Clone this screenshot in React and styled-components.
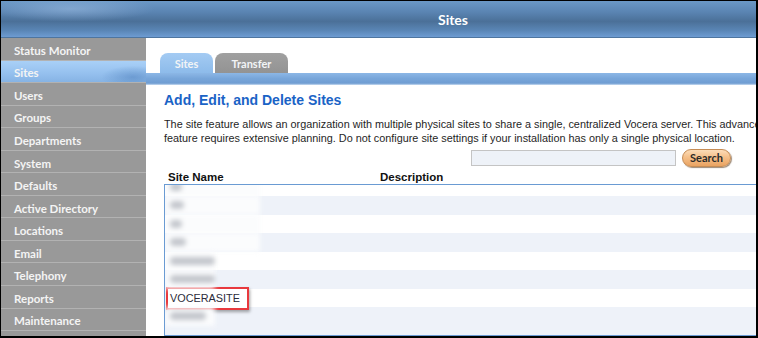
import styled, { createGlobalStyle } from 'styled-components';

const navItems = [
  'Status Monitor',
  'Sites',
  'Users',
  'Groups',
  'Departments',
  'System',
  'Defaults',
  'Active Directory',
  'Locations',
  'Email',
  'Telephony',
  'Reports',
  'Maintenance',
];

// site names are blurred in the source, widths only
const siteRows = [
  { width: 12 },
  { width: 14 },
  { width: 12 },
  { width: 16 },
  { width: 50 },
  { width: 46 },
  { name: 'VOCERASITE' },
  { width: 36 },
];

const App = () => {
  return (
    <>
      <GlobalStyle />
      <Frame>
        <Header>
          <span />
          <HeaderTitle>Sites</HeaderTitle>
        </Header>
        <Body>
          <Sidebar>
            {navItems.map((v) => (
              <NavItem key={v} $active={v === 'Sites'}>{v}</NavItem>
            ))}
          </Sidebar>
          <Main>
            <Tabs>
              <Tab $active>Sites</Tab>
              <Tab>Transfer</Tab>
            </Tabs>
            <TabBar />
            <Content>
              <Heading>Add, Edit, and Delete Sites</Heading>
              <Intro>
                The site feature allows an organization with multiple physical sites to share a single, centralized Vocera server. This advanced
                <br />
                feature requires extensive planning. Do not configure site settings if your installation has only a single physical location.
              </Intro>
              <SearchRow>
                <SearchInput type="text" />
                <SearchButton type="button">Search</SearchButton>
              </SearchRow>
              <ColumnHeads>
                <ColName>Site Name</ColName>
                <ColName>Description</ColName>
              </ColumnHeads>
              <ListBox>
                <ListInner>
                  {siteRows.map((row, i) => (
                    <Row key={i} $striped={i % 2 === 1}>
                      {row.name ? (
                        <Highlight>{row.name}</Highlight>
                      ) : (
                        <Blurred $wide={i < 4}>
                          <BlurText style={{ width: row.width }} />
                        </Blurred>
                      )}
                    </Row>
                  ))}
                </ListInner>
              </ListBox>
            </Content>
          </Main>
        </Body>
      </Frame>
    </>
  );
};

const GlobalStyle = createGlobalStyle`
  html, body {
    margin: 0;
    padding: 0;
    background: #fff;
  }
  * {
    box-sizing: border-box;
  }
`;

const Frame = styled.div`
  width: 758px;
  height: 338px;
  border-style: solid;
  border-color: #000;
  border-width: 1px 2px 2px 1px;
  display: flex;
  flex-direction: column;
  overflow: hidden;
  background: #fff;
`;

const Header = styled.div`
  height: 37px;
  flex: none;
  display: grid;
  grid-template-columns: 145px 1fr;
  align-items: center;
  background:
    radial-gradient(ellipse 120px 18px at 70px 8px, rgba(170, 200, 235, 0.45), rgba(170, 200, 235, 0) 70%),
    linear-gradient(180deg, #6b98c6 0%, #5a84b2 30%, #4b7098 55%, #5a86b6 80%, #6c9ad0 96%, #3f6286 100%);
`;

const HeaderTitle = styled.div`
  text-align: center;
  font-family: Lato, "Open Sans", sans-serif;
  font-weight: 700;
  font-size: 14px;
  color: #fff;
  padding-left: 4px;
`;

const Body = styled.div`
  flex: 1;
  display: grid;
  grid-template-columns: 145px 1fr;
  min-height: 0;
`;

const Sidebar = styled.nav`
  background: #999;
  display: flex;
  flex-direction: column;
`;

const NavItem = styled.div`
  height: 22.55px;
  flex: none;
  display: flex;
  align-items: center;
  padding: 3px 0 0 13px;
  font-family: Lato, "Open Sans", sans-serif;
  font-weight: 700;
  font-size: 11.5px;
  color: #f4f4f4;
  border-bottom: 1px solid #b2b2b2;
  background: ${({ $active }) => ($active
    ? 'radial-gradient(ellipse 40px 14px at 132px 16px, rgba(80, 130, 190, 0.55), rgba(80, 130, 190, 0) 80%), linear-gradient(180deg, #a9d0f7 0%, #95c0ee 60%, #86b3e4 100%)'
    : 'transparent')};
`;

const Main = styled.main`
  display: flex;
  flex-direction: column;
  min-width: 0;
  min-height: 0;
  overflow: hidden;
`;

const Tabs = styled.div`
  display: flex;
  gap: 2px;
  margin: 15px 0 0 14px;
`;

const Tab = styled.div`
  height: 20px;
  padding: 0 14px;
  min-width: ${({ $active }) => ($active ? '53px' : '73px')};
  display: flex;
  align-items: center;
  justify-content: center;
  border-radius: 8px 8px 0 0;
  font-family: Lato, "Open Sans", sans-serif;
  font-weight: 700;
  font-size: 11px;
  color: #f2f4f6;
  background: ${({ $active }) => ($active
    ? 'linear-gradient(180deg, #a4cbf3 0%, #8dbbea 100%)'
    : 'linear-gradient(180deg, #a0a0a0 0%, #939393 100%)')};
`;

const TabBar = styled.div`
  height: 12px;
  flex: none;
  background: linear-gradient(180deg, #8cb7e6 0%, #78a6da 45%, #6f9dd2 85%, #c9dcf1 100%);
`;

const Content = styled.div`
  flex: 1;
  min-height: 0;
  padding-left: 18px;
  display: flex;
  flex-direction: column;
  font-family: "Liberation Sans", Arial, sans-serif;
`;

const Heading = styled.h2`
  margin: 7px 0 0;
  font-size: 14px;
  line-height: 17px;
  font-weight: 700;
  color: #1a63c6;
`;

const Intro = styled.p`
  margin: 8px 0 0;
  font-size: 10.85px;
  line-height: 14px;
  color: #1f1f1f;
  white-space: nowrap;
`;

const SearchRow = styled.div`
  display: flex;
  align-items: center;
  justify-content: flex-end;
  gap: 6px;
  padding-right: 25px;
  margin-top: 4px;
`;

const SearchInput = styled.input`
  width: 205px;
  height: 16px;
  margin: 0;
  padding: 0;
  border: 1px solid #c4c4c4;
  background: #eef2f8;
`;

const SearchButton = styled.button`
  width: 49px;
  height: 18px;
  padding: 0 0 1px;
  border: 1px solid #c58c55;
  border-radius: 9px;
  font-family: Lato, "Open Sans", sans-serif;
  font-weight: 700;
  font-size: 11px;
  color: #2a2a2a;
  background: linear-gradient(180deg, #fcdcb8 0%, #f5c08a 45%, #e9a362 100%);
  box-shadow: 1px 1px 1px rgba(90, 60, 30, 0.6);
`;

const ColumnHeads = styled.div`
  display: grid;
  grid-template-columns: 212px 1fr;
  padding-left: 4px;
  margin-top: 4px;
`;

const ColName = styled.div`
  font-size: 11.5px;
  font-weight: 700;
  line-height: 13px;
  color: #111;
`;

const ListBox = styled.div`
  flex: 1;
  min-height: 0;
  margin-right: -4px;
  border: 1px solid #6a9bd3;
  background: #eef2f9;
  overflow: hidden;
`;

const ListInner = styled.div`
  margin-top: -7.5px;
`;

const Row = styled.div`
  height: 18.5px;
  display: flex;
  align-items: center;
  padding-left: 3px;
  background: ${({ $striped }) => ($striped ? '#eef2f9' : '#fff')};
`;

const Blurred = styled.div`
  width: ${({ $wide }) => ($wide ? '95px' : '50px')};
  height: 18.5px;
  margin-left: -3px;
  padding-left: 5px;
  display: flex;
  align-items: center;
  background: #fbfcfd;
  filter: blur(2.6px);
`;

const BlurText = styled.span`
  display: block;
  height: 8px;
  border-radius: 4px;
  background: #c3c6cc;
`;

const Highlight = styled.span`
  margin: 2px 0 0 -2px;
  padding: 3px 7px 3px 2px;
  border: 2px solid #e8393e;
  font-size: 10.85px;
  line-height: 13px;
  color: #2c2c3a;
  background: #fff;
  box-shadow: 1px 2px 3px rgba(0, 0, 0, 0.35);
`;

export default App;
